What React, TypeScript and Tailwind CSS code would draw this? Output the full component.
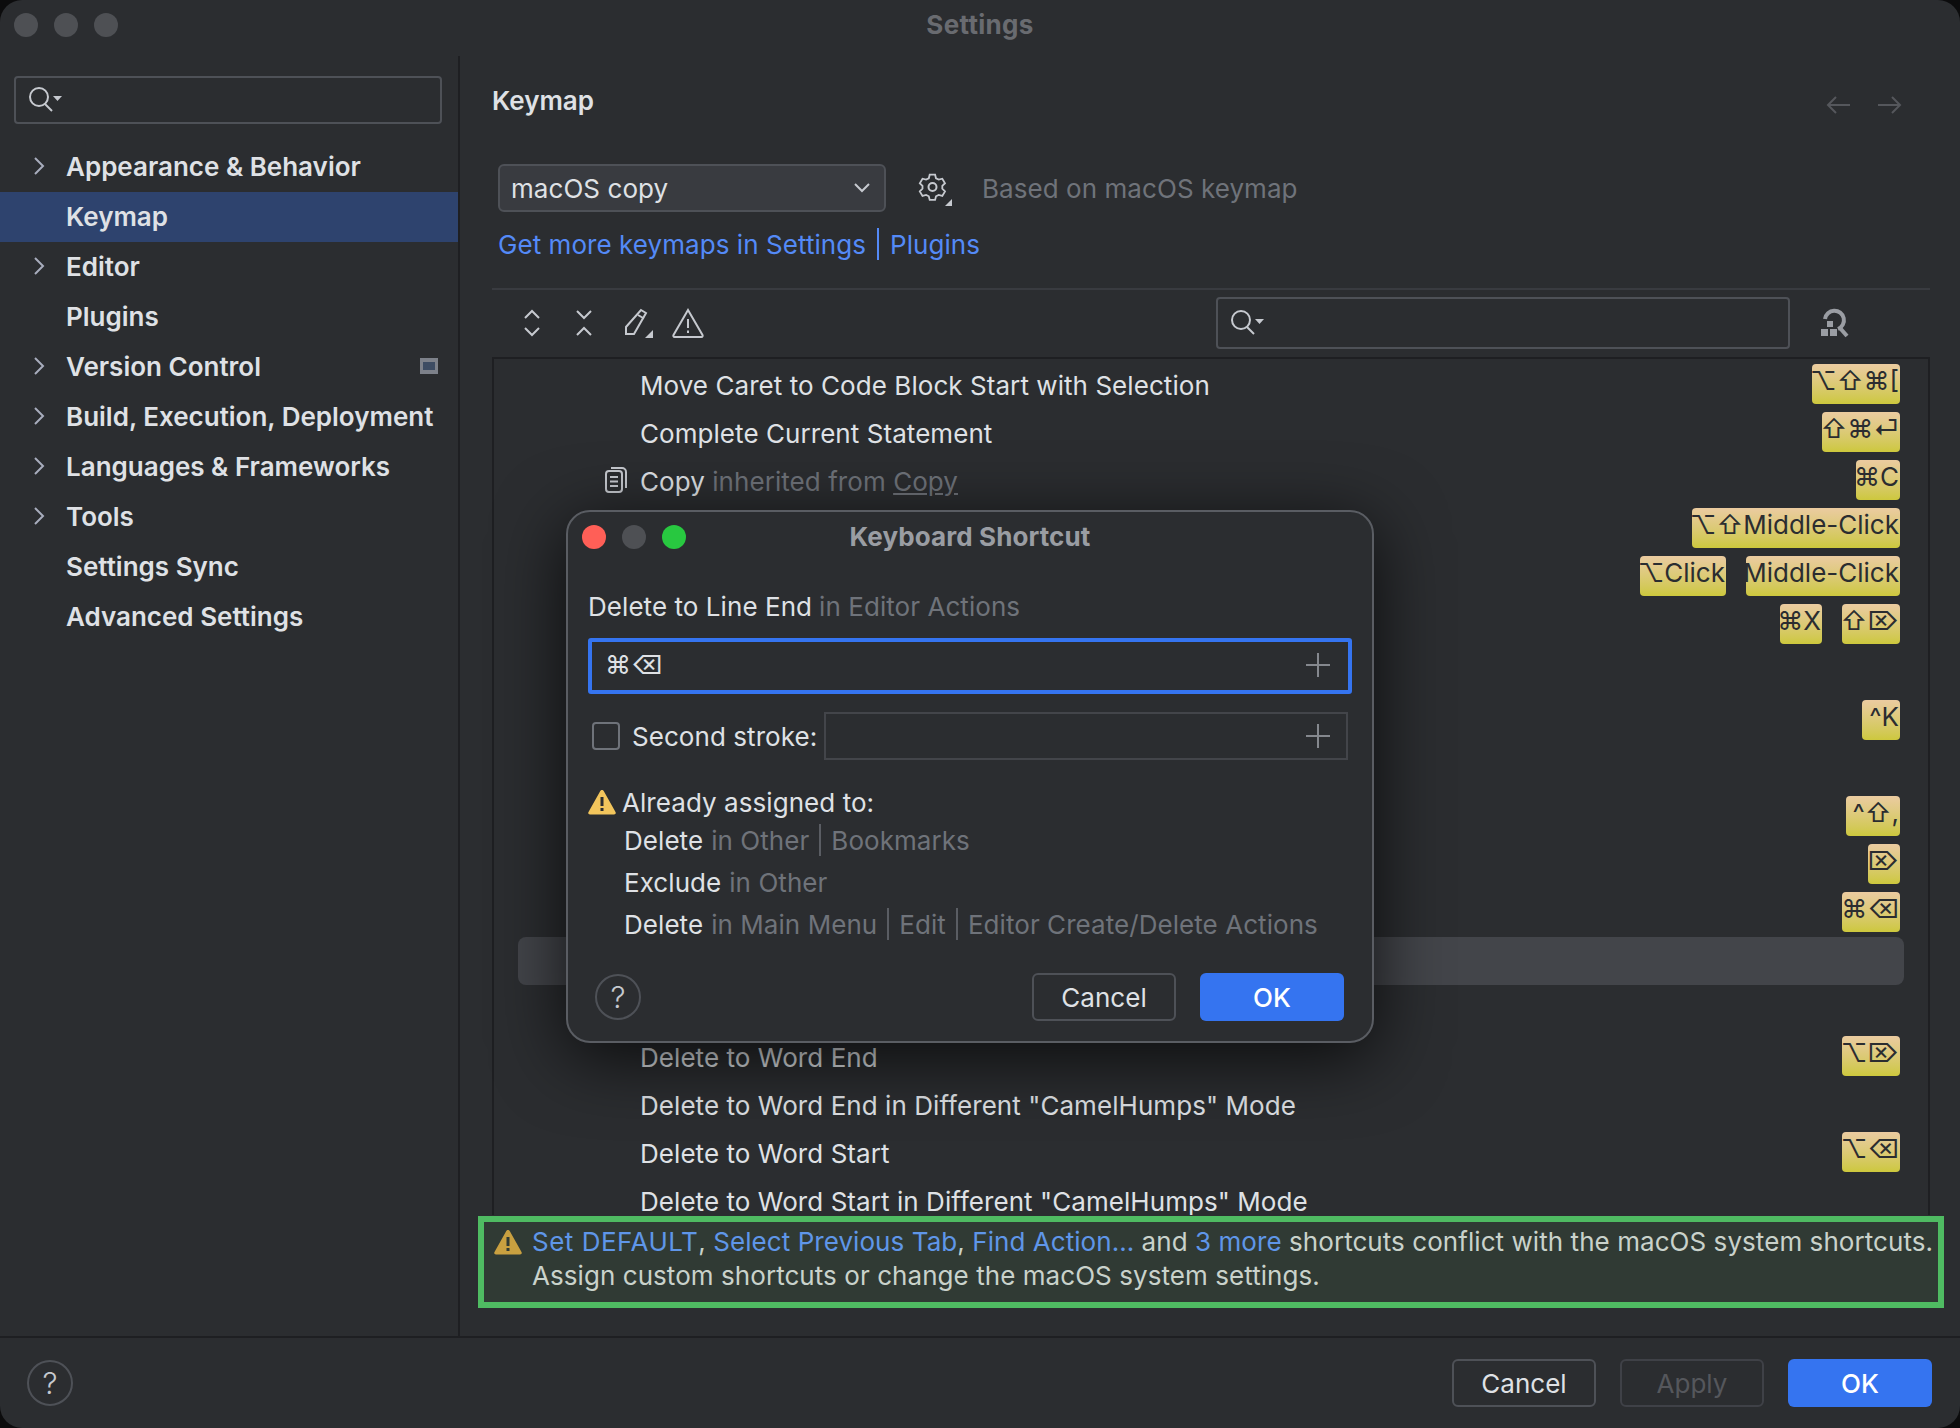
import React from "react";

const Chevron = () => (
  <svg width="14" height="20" viewBox="0 0 14 20" fill="none" stroke="#a8adbd" strokeWidth="2"><path d="M3 2l8 8-8 8" /></svg>
);
const SearchIcon = () => (
  <svg width="34" height="28" viewBox="0 0 34 28" fill="none" stroke="#c6c9cf" strokeWidth="2">
    <circle cx="11" cy="11" r="9" />
    <path d="M17 18l7 7" />
    <path d="M25 10h9l-4.5 5z" fill="#c6c9cf" stroke="none" />
  </svg>
);
const Plus = () => (
  <svg width="24" height="24" viewBox="0 0 24 24" stroke="#85888e" strokeWidth="2"><path d="M12 0v24M0 12h24" /></svg>
);
const Warn = ({ color, mark }: { color: string; mark: string }) => (
  <svg width="28" height="26" viewBox="0 0 28 26">
    <path d="M14 1c1 0 1.500.5 2 1.500L27.500 23c.7 1.500 0 2.500-1.500 2.500H2C.5 25.500-.2 24.500.5 23L12 2.500C12.500 1.500 13 1 14 1z" fill={color} />
    <path d="M12.500 8h3v9h-3zM12.500 19h3v3h-3z" fill={mark} />
  </svg>
);
const Sep = ({ color }: { color: string }) => <span className={`inline-block w-[2px] h-[32px] mx-[11px] ${color}`} />;
const DialogSep = () => <span className="mx-[10px] inline-block h-[32px] w-[2px] bg-[#5a5d63]" />;

const navItems: { label: string; chevron?: boolean; active?: boolean; badge?: boolean }[] = [
  { label: "Appearance & Behavior", chevron: true },
  { label: "Keymap", active: true },
  { label: "Editor", chevron: true },
  { label: "Plugins" },
  { label: "Version Control", chevron: true, badge: true },
  { label: "Build, Execution, Deployment", chevron: true },
  { label: "Languages & Frameworks", chevron: true },
  { label: "Tools", chevron: true },
  { label: "Settings Sync" },
  { label: "Advanced Settings" },
];

const Key = ({ w, children }: { w: string; children: string }) => (
  <span className={`flex h-[40px] ${w} shrink-0 items-start justify-end rounded-[4px] bg-gradient-to-b from-[#ebcba0] to-[#cdc83c] pr-[1px] pt-[1px] text-[26px] leading-[32px] tracking-normal whitespace-nowrap text-[#2b2d30]`}>
    {children}
  </span>
);

const rows: { text?: React.ReactNode; keys?: [string, string][]; selected?: boolean }[] = [
  { text: "Move Caret to Code Block Start with Selection", keys: [["w-[88px]", "⌥⇧⌘["]] },
  { text: "Complete Current Statement", keys: [["w-[78px]", "⇧⌘⏎"]] },
  {
    text: (
      <>
        Copy <span className="text-[#6f737a]">inherited from <span className="underline">Copy</span></span>
      </>
    ),
    keys: [["w-[44px]", "⌘C"]],
  },
  { keys: [["w-[208px]", "⌥⇧Middle-Click"]] },
  { keys: [["w-[86px]", "⌥Click"], ["w-[154px]", "Middle-Click"]] },
  { keys: [["w-[42px]", "⌘X"], ["w-[58px]", "⇧⌦"]] },
  {},
  { keys: [["w-[38px]", "^K"]] },
  {},
  { keys: [["w-[54px]", "^⇧,"]] },
  { keys: [["w-[32px]", "⌦"]] },
  { keys: [["w-[58px]", "⌘⌫"]] },
  { selected: true },
  {},
  { text: "Delete to Word End", keys: [["w-[58px]", "⌥⌦"]] },
  { text: 'Delete to Word End in Different "CamelHumps" Mode' },
  { text: "Delete to Word Start", keys: [["w-[58px]", "⌥⌫"]] },
  { text: 'Delete to Word Start in Different "CamelHumps" Mode' },
];

export default function App() {
  return (
    <div className="relative h-[1428px] w-[1960px] overflow-hidden bg-[#0c0c0d] font-['Inter','DejaVu_Sans',sans-serif] text-[26px] text-[#dfe1e5]">
      <div className="flex h-full flex-col overflow-hidden rounded-[22px] bg-[#2b2d30]">
        <div className="grid h-[56px] shrink-0 grid-cols-[1fr_auto_1fr] items-center px-[14px]">
          <div className="flex gap-[16px] pb-[6px]">
            <span className="h-[24px] w-[24px] rounded-full bg-[#4e5054]" />
            <span className="h-[24px] w-[24px] rounded-full bg-[#4e5054]" />
            <span className="h-[24px] w-[24px] rounded-full bg-[#4e5054]" />
          </div>
          <div className="pb-[7px] text-[26px] font-bold tracking-[0.3px] text-[#696b70]">Settings</div>
          <div />
        </div>

        <div className="flex min-h-0 flex-1">
          <aside className="w-[460px] shrink-0 border-r-2 border-[#1e1f22]">
            <div className="ml-[14px] mt-[20px] flex h-[48px] w-[428px] items-center rounded-[4px] border-2 border-[#4e5157] pl-[12px]">
              <SearchIcon />
            </div>
            <nav className="mt-[18px]">
              {navItems.map((n) => (
                <div key={n.label} className={`relative flex h-[50px] items-center pb-[2px] pl-[66px] font-semibold ${n.active ? "bg-[#2e436e]" : ""}`}>
                  {n.chevron && (
                    <span className="absolute left-[32px] top-[14px]">
                      <Chevron />
                    </span>
                  )}
                  <span>{n.label}</span>
                  {n.badge && (
                    <span className="ml-auto mr-[20px] flex h-[16px] w-[18px] items-center justify-center bg-[#7d818a]">
                      <span className="h-[8px] w-[12px] bg-[#3d4c63]" />
                    </span>
                  )}
                </div>
              ))}
            </nav>
          </aside>

          <main className="flex min-w-0 flex-1 flex-col pl-[32px] pr-[30px] tracking-[0.06px]">
            <header className="mt-[24px] flex h-[40px] items-center justify-between">
              <h1 className="text-[26px] font-semibold tracking-normal">Keymap</h1>
              <div className="mt-[9px] flex items-center gap-[28px] pr-[28px]">
                <svg width="24" height="20" viewBox="0 0 24 20" fill="none" stroke="#55575c" strokeWidth="2"><path d="M24 10H2M10 2l-8 8 8 8" /></svg>
                <svg width="24" height="20" viewBox="0 0 24 20" fill="none" stroke="#55575c" strokeWidth="2"><path d="M0 10h22M14 2l8 8-8 8" /></svg>
              </div>
            </header>

            <div className="mt-[44px] flex h-[48px] items-center pl-[6px]">
              <div className="flex h-[48px] w-[388px] items-center justify-between rounded-[6px] border-2 border-[#4e5157] bg-[#393b40] pl-[11px] pr-[14px]">
                <span>macOS copy</span>
                <svg width="16" height="10" viewBox="0 0 16 10" fill="none" stroke="#c6c9cf" strokeWidth="2"><path d="M1 1l7 7 7-7" /></svg>
              </div>
              <svg className="ml-[32px] mt-[2px]" width="34" height="34" viewBox="0 0 34 34" fill="none" stroke="#c6c9cf" strokeWidth="2">
                <path d="M13 3h6l1 4 3 1.500 4-1 3 5-3 3v3l3 3-3 5-4-1-3 1.500-1 4h-6l-1-4-3-1.500-4 1-3-5 3-3v-3l-3-3 3-5 4 1L12 7z" transform="scale(.9)" />
                <circle cx="14.500" cy="15" r="4" />
                <path d="M34 27v7h-7z" fill="#c6c9cf" stroke="none" />
              </svg>
              <span className="ml-[30px] text-[#6f737a]">Based on macOS keymap</span>
            </div>

            <div className="mt-[12px] flex h-[40px] items-center pl-[6px] text-[#548af7]">
              Get more keymaps in Settings
              <Sep color="bg-[#548af7]" />
              Plugins
            </div>

            <div className="mt-[24px] h-[2px] shrink-0 bg-[#393b40]" />

            <div className="flex h-[67px] shrink-0 items-center pb-[1px]">
              <svg className="ml-[32px]" width="16" height="28" viewBox="0 0 16 28" fill="none" stroke="#c6c9cf" strokeWidth="2"><path d="M1 9l7-7 7 7M1 19l7 7 7-7" /></svg>
              <svg className="ml-[36px]" width="16" height="28" viewBox="0 0 16 28" fill="none" stroke="#c6c9cf" strokeWidth="2"><path d="M1 2l7 7 7-7M1 26l7-7 7 7" /></svg>
              <svg className="ml-[31px]" width="30" height="30" viewBox="0 0 30 30" fill="none" stroke="#c6c9cf" strokeWidth="2">
                <path d="M18 2l5 3-12 21H3v-7z" />
                <path d="M15 7l6 3.500" />
                <path d="M30 22v8h-8z" fill="#c6c9cf" stroke="none" />
              </svg>
              <svg className="ml-[19px]" width="32" height="30" viewBox="0 0 32 30" fill="none" stroke="#c6c9cf" strokeWidth="2">
                <path d="M16 2L30.500 27c.5 1 0 2-1 2H2.500c-1 0-1.500-1-1-2z" />
                <path d="M16 11v9M16 22.500v2.500" />
              </svg>
              <div className="ml-[512px] flex h-[52px] w-[574px] items-center rounded-[4px] border-2 border-[#4e5157] pl-[12px]">
                <SearchIcon />
              </div>
              <svg className="ml-[30px]" width="30" height="30" viewBox="0 0 30 30" fill="none">
                <path d="M5 11a9.500 9.500 0 1 1 13 10" stroke="#9a9da3" strokeWidth="4" />
                <path d="M20 20l7 8" stroke="#9a9da3" strokeWidth="4" />
                <path d="M7 13h6v6H7zM1 21h7v7H1zM10 21h7v7h-7z" fill="#9a9da3" />
              </svg>
            </div>

            <div className="h-[858px] shrink-0 overflow-hidden border-x-2 border-t-2 border-[#1e1f22] pt-[2px]">
              {rows.map((r, i) => (
                <div key={i} className={`flex h-[48px] items-center ${r.selected ? "mx-[24px] rounded-[8px] bg-[#43454a]" : "pl-[146px] pr-[28px]"}`}>
                  {i === 2 && (
                    <svg className="ml-[-36px] mr-[12px] mt-[-2px]" width="24" height="26" viewBox="0 0 24 26" fill="none" stroke="#c6c9cf" strokeWidth="2">
                      <rect x="2" y="4" width="16" height="21" rx="3" />
                      <path d="M7 1h11a4 4 0 0 1 4 4v16M6 10h8M6 14.500h8M6 19h8" />
                    </svg>
                  )}
                  {r.text && <span className="whitespace-nowrap">{r.text}</span>}
                  {r.keys && (
                    <div className="ml-auto flex gap-[20px] self-start pt-[3px]">
                      {r.keys.map(([w, k]) => (
                        <Key key={k} w={w}>{k}</Key>
                      ))}
                    </div>
                  )}
                </div>
              ))}
            </div>

            <div className="mx-[-14px] mt-[1px] h-[92px] shrink-0 border-[6px] border-[#4fbb62] bg-[#303a34] pl-[10px] text-[#c9d2cb]">
              <div className="flex h-[39px] items-center">
                <span className="mr-[10px] flex">
                  <Warn color="#c9a040" mark="#303a34" />
                </span>
                <span className="whitespace-nowrap">
                  <span className="tracking-[0.5px] text-[#5f96e8]">Set DEFAULT</span>, <span className="text-[#5f96e8]">Select Previous Tab</span>, <span className="text-[#5f96e8]">Find Action…</span> and <span className="text-[#5f96e8]">3 more</span> shortcuts conflict with the macOS system shortcuts.
                </span>
              </div>
              <div className="flex h-[28px] items-center pl-[38px] whitespace-nowrap">Assign custom shortcuts or change the macOS system settings.</div>
            </div>
          </main>
        </div>

        <footer className="flex h-[92px] shrink-0 items-center border-t-2 border-[#1e1f22] pl-[27px] pr-[28px]">
          <span className="flex h-[46px] w-[46px] items-center justify-center rounded-full border-2 border-[#4e5157] text-[30px] font-light text-[#c6c9cf]">?</span>
          <span className="ml-auto flex h-[48px] w-[144px] items-center justify-center rounded-[6px] border-2 border-[#4e5157]">Cancel</span>
          <span className="ml-[24px] flex h-[48px] w-[144px] items-center justify-center rounded-[6px] border-2 border-[#3f4147] text-[#55575c]">Apply</span>
          <span className="ml-[24px] flex h-[48px] w-[144px] items-center justify-center rounded-[6px] bg-[#3574f0] font-medium text-white">OK</span>
        </footer>
      </div>

      <section className="absolute left-[566px] top-[510px] flex h-[533px] w-[808px] flex-col rounded-[24px] border-2 border-[#5a5d63] bg-[#2b2d30] px-[20px] tracking-[0.06px] shadow-[0_14px_70px_rgba(0,0,0,0.75)]">
        <div className="grid h-[50px] shrink-0 grid-cols-[1fr_auto_1fr] items-center">
          <div className="ml-[-6px] flex gap-[16px]">
            <span className="h-[24px] w-[24px] rounded-full bg-[#ff5f57]" />
            <span className="h-[24px] w-[24px] rounded-full bg-[#4e5054]" />
            <span className="h-[24px] w-[24px] rounded-full bg-[#28c840]" />
          </div>
          <div className="pb-[2px] font-bold tracking-[0.1px] text-[#9a9da3]">Keyboard Shortcut</div>
          <div />
        </div>
        <div className="mt-[24px] flex h-[40px] items-center">
          Delete to Line End<span className="ml-[7px] text-[#6f737a]">in Editor Actions</span>
        </div>
        <div className="mt-[12px] flex h-[56px] shrink-0 items-center justify-between rounded-[3px] border-[4px] border-[#3574f0] pl-[13px] pr-[18px]">
          <span className="pb-[4px] text-[26px] tracking-normal">⌘⌫</span>
          <span className="flex pb-[2px]"><Plus /></span>
        </div>
        <div className="mt-[18px] flex h-[48px] shrink-0 items-center">
          <span className="ml-[4px] h-[28px] w-[28px] rounded-[4px] border-2 border-[#6f737a]" />
          <span className="ml-[12px]">Second stroke:</span>
          <span className="ml-[7px] mr-[4px] flex h-[48px] flex-1 items-center justify-end border-2 border-[#43454a] pr-[16px]">
            <Plus />
          </span>
        </div>
        <div className="mt-[25px] flex h-[34px] items-center">
          <span className="mr-[6px] flex">
            <Warn color="#f2c55c" mark="#2b2d30" />
          </span>
          Already assigned to:
        </div>
        <div className="pl-[36px]">
          <div className="flex h-[42px] items-center">Delete<span className="ml-[8px] flex items-center text-[#6f737a]">in Other<DialogSep />Bookmarks</span></div>
          <div className="flex h-[42px] items-center">Exclude<span className="ml-[8px] text-[#6f737a]">in Other</span></div>
          <div className="flex h-[42px] items-center">Delete<span className="ml-[8px] flex items-center text-[#6f737a]">in Main Menu<DialogSep />Edit<DialogSep />Editor Create/Delete Actions</span></div>
        </div>
        <div className="mt-[28px] flex h-[48px] items-center pl-[7px] pr-[8px]">
          <span className="flex h-[46px] w-[46px] items-center justify-center rounded-full border-2 border-[#4e5157] text-[30px] font-light text-[#c6c9cf]">?</span>
          <span className="ml-auto flex h-[48px] w-[144px] items-center justify-center rounded-[6px] border-2 border-[#4e5157]">Cancel</span>
          <span className="ml-[24px] flex h-[48px] w-[144px] items-center justify-center rounded-[6px] bg-[#3574f0] font-medium text-white">OK</span>
        </div>
      </section>
    </div>
  );
}
